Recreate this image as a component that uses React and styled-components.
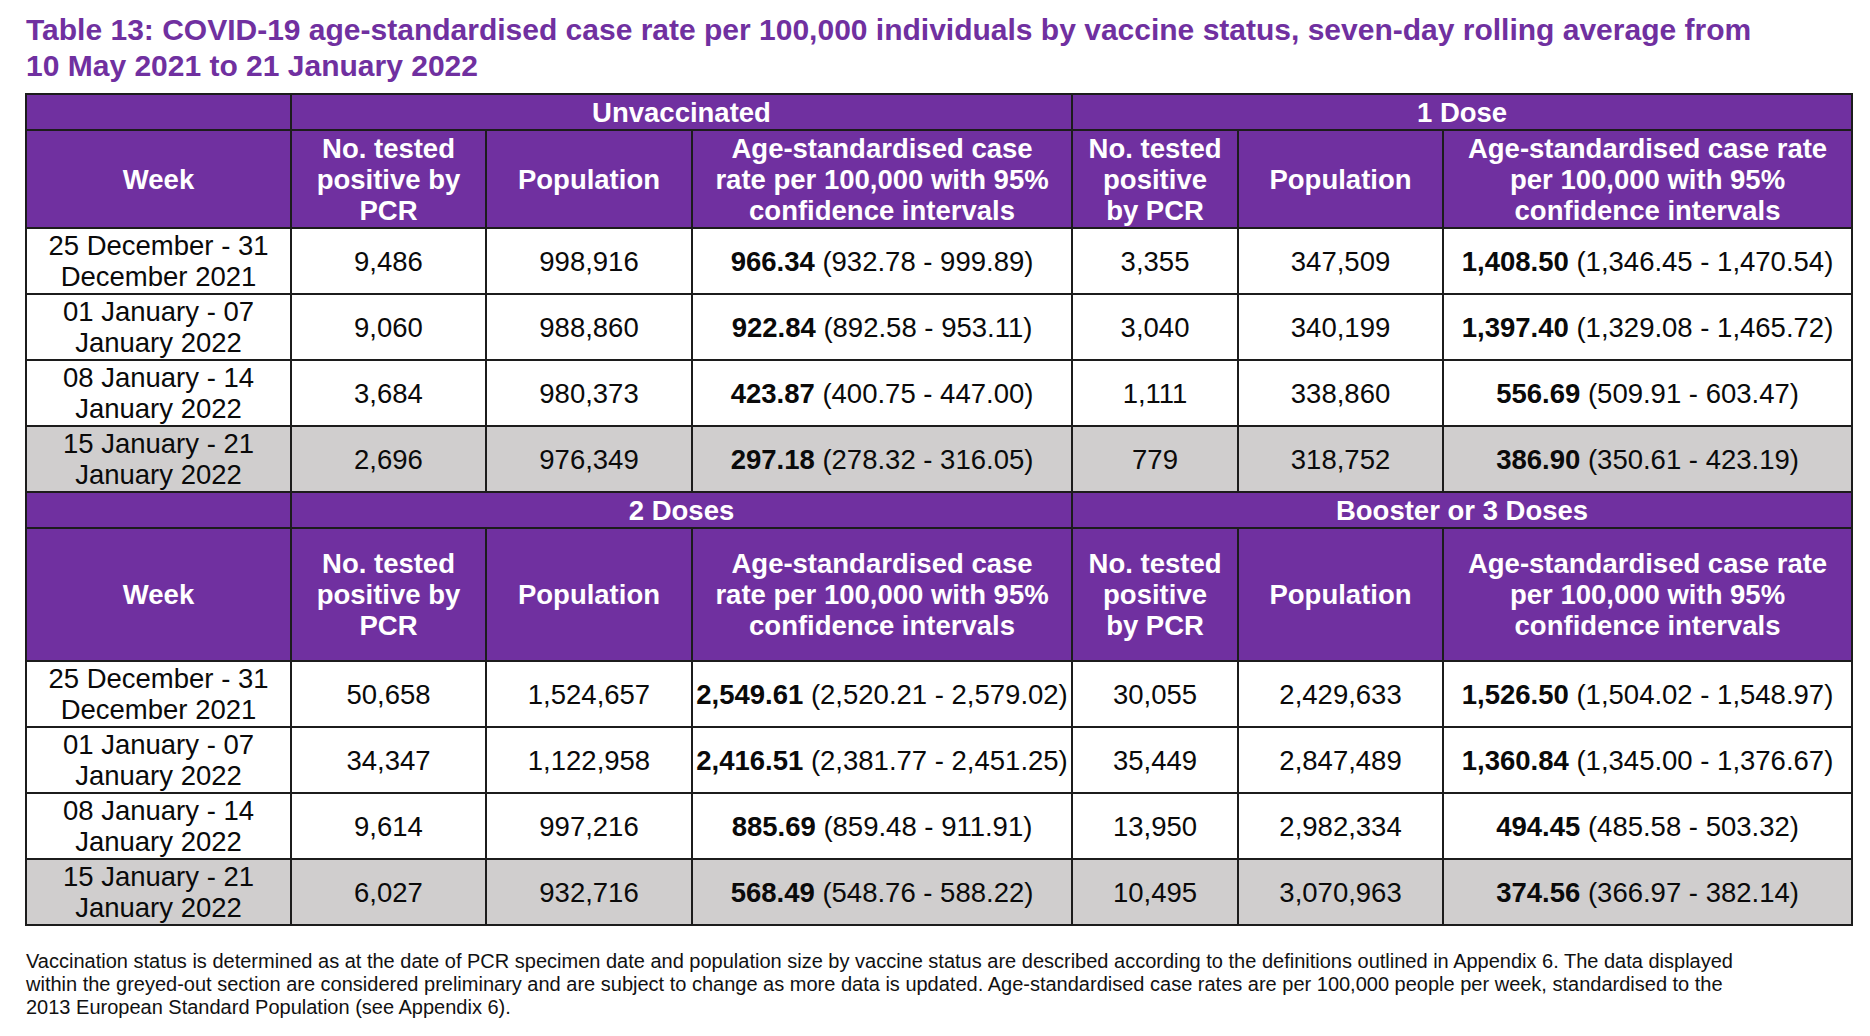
import styled, { createGlobalStyle } from 'styled-components';

const GlobalStyle = createGlobalStyle`
  html, body {
    margin: 0;
    padding: 0;
    background: #ffffff;
  }
  body {
    font-family: "Liberation Sans", Arial, sans-serif;
    color: #000;
  }
`;

const widths = [265, 195, 206, 380, 166, 205, 409];

const headLeft = [
  ['No. tested', 'positive by', 'PCR'],
  ['Population'],
  ['Age-standardised case', 'rate per 100,000 with 95%', 'confidence intervals'],
];

const headRight = [
  ['No. tested', 'positive', 'by PCR'],
  ['Population'],
  ['Age-standardised case rate', 'per 100,000 with 95%', 'confidence intervals'],
];

const sections = [
  {
    left: 'Unvaccinated',
    right: '1 Dose',
    headHeight: 98,
    rows: [
      ['25 December - 31', 'December 2021', '9,486', '998,916', '966.34', '(932.78 - 999.89)', '3,355', '347,509', '1,408.50', '(1,346.45 - 1,470.54)'],
      ['01 January - 07', 'January 2022', '9,060', '988,860', '922.84', '(892.58 - 953.11)', '3,040', '340,199', '1,397.40', '(1,329.08 - 1,465.72)'],
      ['08 January - 14', 'January 2022', '3,684', '980,373', '423.87', '(400.75 - 447.00)', '1,111', '338,860', '556.69', '(509.91 - 603.47)'],
      ['15 January - 21', 'January 2022', '2,696', '976,349', '297.18', '(278.32 - 316.05)', '779', '318,752', '386.90', '(350.61 - 423.19)'],
    ],
  },
  {
    left: '2 Doses',
    right: 'Booster or 3 Doses',
    headHeight: 133,
    rows: [
      ['25 December - 31', 'December 2021', '50,658', '1,524,657', '2,549.61', '(2,520.21 - 2,579.02)', '30,055', '2,429,633', '1,526.50', '(1,504.02 - 1,548.97)'],
      ['01 January - 07', 'January 2022', '34,347', '1,122,958', '2,416.51', '(2,381.77 - 2,451.25)', '35,449', '2,847,489', '1,360.84', '(1,345.00 - 1,376.67)'],
      ['08 January - 14', 'January 2022', '9,614', '997,216', '885.69', '(859.48 - 911.91)', '13,950', '2,982,334', '494.45', '(485.58 - 503.32)'],
      ['15 January - 21', 'January 2022', '6,027', '932,716', '568.49', '(548.76 - 588.22)', '10,495', '3,070,963', '374.56', '(366.97 - 382.14)'],
    ],
  },
];

const Lines = ({ lines }) =>
  lines.map((line, i) => (
    <span key={i}>
      {i > 0 && <br />}
      {line}
    </span>
  ));

const App = () => {
  return (
    <Page>
      <GlobalStyle />
      <Title>
        Table 13: COVID-19 age-standardised case rate per 100,000 individuals by vaccine status, seven-day rolling average from
        <br />
        10 May 2021 to 21 January 2022
      </Title>

      <Table>
        <colgroup>
          {widths.map((w, i) => (
            <col key={i} style={{ width: w }} />
          ))}
        </colgroup>
        <tbody>
          {sections.map(section => [
            <GroupRow key={section.left + '-g'}>
              <GroupCell />
              <GroupCell colSpan={3}>{section.left}</GroupCell>
              <GroupCell colSpan={3}>{section.right}</GroupCell>
            </GroupRow>,
            <HeadRow key={section.left + '-h'} $height={section.headHeight}>
              <HeadCell>Week</HeadCell>
              {headLeft.map((lines, i) => (
                <HeadCell key={'l' + i}>
                  <Lines lines={lines} />
                </HeadCell>
              ))}
              {headRight.map((lines, i) => (
                <HeadCell key={'r' + i}>
                  <Lines lines={lines} />
                </HeadCell>
              ))}
            </HeadRow>,
            ...section.rows.map((row, index) => (
              <DataRow key={section.left + index} $grey={index === section.rows.length - 1}>
                <DataCell>
                  {row[0]}
                  <br />
                  {row[1]}
                </DataCell>
                <DataCell>{row[2]}</DataCell>
                <DataCell>{row[3]}</DataCell>
                <RateCell>
                  <b>{row[4]}</b> {row[5]}
                </RateCell>
                <DataCell>{row[6]}</DataCell>
                <DataCell>{row[7]}</DataCell>
                <RateCell>
                  <b>{row[8]}</b> {row[9]}
                </RateCell>
              </DataRow>
            )),
          ])}
        </tbody>
      </Table>

      <Note>
        Vaccination status is determined as at the date of PCR specimen date and population size by vaccine status are described according to the definitions outlined in Appendix 6. The data displayed
        <br />
        within the greyed-out section are considered preliminary and are subject to change as more data is updated. Age-standardised case rates are per 100,000 people per week, standardised to the
        <br />
        2013 European Standard Population (see Appendix 6).
      </Note>
    </Page>
  );
};

export default App;

const Page = styled.div`
  width: 1870px;
  padding: 12px 0 0 25px;
  box-sizing: border-box;
`;

const Title = styled.h1`
  margin: 0 0 9px 1px;
  font-size: 30px;
  line-height: 36px;
  font-weight: bold;
  color: #7030a0;
  white-space: nowrap;
`;

const Table = styled.table`
  border-collapse: collapse;
  table-layout: fixed;
  width: 1826px;
  border: 2px solid #1c1c1c;
`;

const GroupRow = styled.tr`
  height: 36px;
`;

const GroupCell = styled.td`
  background: #7030a0;
  color: #ffffff;
  font-size: 27.5px;
  font-weight: bold;
  text-align: center;
  vertical-align: middle;
  border: 2px solid #1c1c1c;
  padding: 0;
  line-height: 31px;
`;

const HeadRow = styled.tr`
  height: ${props => props.$height}px;
`;

const HeadCell = styled.th`
  background: #7030a0;
  color: #ffffff;
  font-size: 27.5px;
  font-weight: bold;
  line-height: 31px;
  text-align: center;
  vertical-align: middle;
  border: 2px solid #1c1c1c;
  padding: 0 2px;
  white-space: nowrap;
`;

const DataRow = styled.tr`
  height: 66px;
  background: ${props => (props.$grey ? '#d0cece' : '#ffffff')};
`;

const DataCell = styled.td`
  font-size: 27.5px;
  line-height: 31px;
  text-align: center;
  vertical-align: middle;
  border: 2px solid #1c1c1c;
  padding: 0 2px;
  color: #0a0a0a;
`;

const RateCell = styled(DataCell)`
  white-space: nowrap;
  b {
    font-weight: bold;
  }
`;

const Note = styled.p`
  margin: 24px 0 0 1px;
  font-size: 20px;
  line-height: 23px;
  color: #111111;
  white-space: nowrap;
`;
